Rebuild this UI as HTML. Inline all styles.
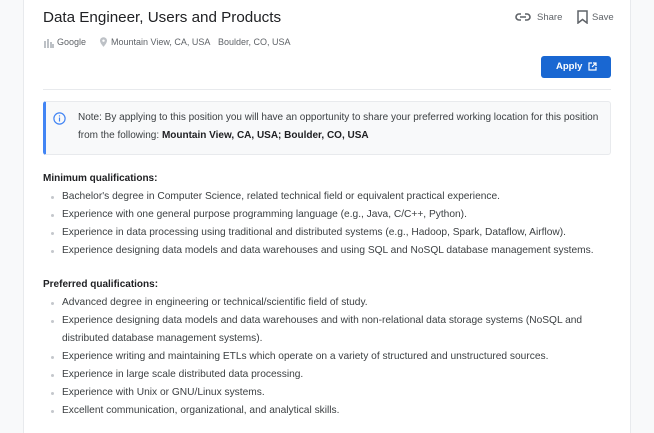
<!DOCTYPE html>
<html><head><meta charset="utf-8"><style>
*{margin:0;padding:0;box-sizing:border-box}
body{width:654px;height:433px;overflow:hidden;background:#f8f9fa;font-family:"Liberation Sans",sans-serif;color:#3c4043;position:relative}
.card{position:absolute;left:23px;top:0;width:608px;height:433px;background:#fff;border-left:1px solid #e8eaed;border-right:1px solid #e8eaed}
.a{position:absolute;white-space:nowrap}
h1{position:absolute;left:43px;top:9px;font-size:15.2px;font-weight:normal;color:#202124}
.meta{font-size:9px;color:#5f6368;top:37px}
.btn{position:absolute;left:541px;top:56px;width:70px;height:22px;background:#1967d2;border-radius:3px;color:#fff;font-size:9.5px;font-weight:bold}
.hr{position:absolute;left:43px;top:89px;width:568px;height:1px;background:#e8eaed}
.note{position:absolute;left:43px;top:101px;width:568px;height:54px;background:#f8f9fa;border:1px solid #e8eaed;border-left:3px solid #4285f4;border-radius:3px}
.t{font-size:10.2px;color:#3c4043}
.n{font-size:10px;color:#3c4043}
.h{font-size:10px;font-weight:bold;color:#202124}
.dot{position:absolute;left:51px;width:3px;height:3px;border-radius:50%;background:#c4c7cc}
</style></head><body>
<div class="card"></div>
<h1>Data Engineer, Users and Products</h1>
<svg class="a" style="left:44px;top:38px" width="10" height="10" viewBox="0 0 10 10"><rect x="0" y="3" width="2" height="7" fill="#bdc1c6"/><rect x="3" y="1" width="2" height="9" fill="#bdc1c6"/><rect x="6" y="4" width="2" height="6" fill="#bdc1c6"/><rect x="8" y="6" width="2" height="4" fill="#bdc1c6"/></svg>
<div class="a meta" style="left:57px">Google</div>
<svg class="a" style="left:100px;top:37px" width="7" height="10" viewBox="0 0 8 11"><path d="M4 0C1.8 0 0 1.7 0 3.9 0 6.8 4 11 4 11s4-4.2 4-7.1C8 1.7 6.2 0 4 0z" fill="#bdc1c6"/><circle cx="4" cy="4" r="1.4" fill="#fff"/></svg>
<div class="a meta" style="left:111px">Mountain View, CA, USA</div>
<div class="a meta" style="left:218px">Boulder, CO, USA</div>
<svg class="a" style="left:515px;top:12px" width="16" height="10" viewBox="0 0 16 10"><path d="M6 2H4a3 3 0 0 0 0 6h2M10 2h2a3 3 0 0 1 0 6h-2M5 5h6" stroke="#5f6368" stroke-width="1.6" fill="none"/></svg>
<div class="a" style="left:537px;top:12px;font-size:9.5px;color:#5f6368">Share</div>
<svg class="a" style="left:577px;top:10px" width="11" height="14" viewBox="0 0 11 14"><path d="M1 1h9v12L5.5 9.5 1 13z" stroke="#5f6368" stroke-width="1.5" fill="none"/></svg>
<div class="a" style="left:592px;top:12px;font-size:9.5px;color:#5f6368">Save</div>
<div class="btn"><span class="a" style="left:15px;top:5px">Apply</span>
<svg class="a" style="left:47px;top:6px" width="9" height="9" viewBox="0 0 9 9"><path d="M4 1H1v7h7V5M5 1h3v3M8 1 4 5" stroke="#fff" stroke-width="1.2" fill="none"/></svg></div>
<div class="hr"></div>
<div class="note"></div>
<svg class="a" style="left:53px;top:112px" width="13" height="13" viewBox="0 0 13 13"><circle cx="6.5" cy="6.5" r="5.6" stroke="#4285f4" stroke-width="1.2" fill="none"/><rect x="5.9" y="5.5" width="1.2" height="4" fill="#4285f4"/><rect x="5.9" y="3.3" width="1.2" height="1.2" fill="#4285f4"/></svg>
<div class="a n" style="left:78px;top:112px">Note: By applying to this position you will have an opportunity to share your preferred working location for this position</div>
<div class="a n" style="left:78px;top:130px">from the following: <b style="color:#202124">Mountain View, CA, USA; Boulder, CO, USA</b></div>
<div class="a h" style="left:43px;top:173px">Minimum qualifications:</div>
<div class="dot" style="top:196px"></div><div class="a t" style="left:62px;top:191px">Bachelor's degree in Computer Science, related technical field or equivalent practical experience.</div>
<div class="dot" style="top:214px"></div><div class="a t" style="left:62px;top:209px">Experience with one general purpose programming language (e.g., Java, C/C++, Python).</div>
<div class="dot" style="top:232px"></div><div class="a t" style="left:62px;top:227px">Experience in data processing using traditional and distributed systems (e.g., Hadoop, Spark, Dataflow, Airflow).</div>
<div class="dot" style="top:250px"></div><div class="a t" style="left:62px;top:245px">Experience designing data models and data warehouses and using SQL and NoSQL database management systems.</div>
<div class="a h" style="left:43px;top:279px">Preferred qualifications:</div>
<div class="dot" style="top:302px"></div><div class="a t" style="left:62px;top:297px">Advanced degree in engineering or technical/scientific field of study.</div>
<div class="dot" style="top:320px"></div><div class="a t" style="left:62px;top:315px">Experience designing data models and data warehouses and with non-relational data storage systems (NoSQL and</div>
<div class="a t" style="left:62px;top:333px">distributed database management systems).</div>
<div class="dot" style="top:356px"></div><div class="a t" style="left:62px;top:351px">Experience writing and maintaining ETLs which operate on a variety of structured and unstructured sources.</div>
<div class="dot" style="top:374px"></div><div class="a t" style="left:62px;top:369px">Experience in large scale distributed data processing.</div>
<div class="dot" style="top:392px"></div><div class="a t" style="left:62px;top:387px">Experience with Unix or GNU/Linux systems.</div>
<div class="dot" style="top:410px"></div><div class="a t" style="left:62px;top:405px">Excellent communication, organizational, and analytical skills.</div>
</body></html>
